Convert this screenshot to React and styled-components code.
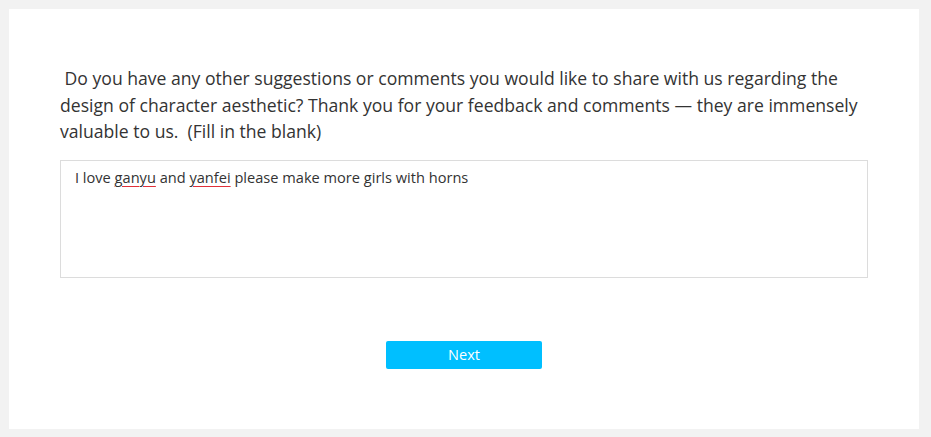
import React from 'react';
import styled, { createGlobalStyle } from 'styled-components';

const GlobalStyle = createGlobalStyle`
  html, body {
    margin: 0;
    padding: 0;
    background: #f2f2f2;
  }
  body {
    font-family: "Open Sans", "Noto Sans", sans-serif;
    color: #333;
  }
`;

const Page = styled.div`
  padding: 9px 12px 8px 9px;
  height: 437px;
  box-sizing: border-box;
`;

const Card = styled.div`
  background: #fff;
  height: 100%;
  box-sizing: border-box;
  padding: 56px 51px 0 51px;
  display: flex;
  flex-direction: column;
`;

const Question = styled.p`
  margin: 0;
  font-size: 17.6px;
  line-height: 26.5px;
  color: #333;
`;

const Answer = styled.div`
  margin-top: 15px;
  height: 118px;
  box-sizing: border-box;
  border: 1px solid #dcdcdc;
  padding: 7px 14px;
  font-size: 14.6px;
  line-height: 18px;
  color: #333;
`;

const Misspelled = styled.span`
  text-decoration-line: underline;
  text-decoration-style: solid;
  text-decoration-color: #e0303a;
  text-decoration-thickness: 1px;
  text-underline-offset: 3px;
`;

const Actions = styled.div`
  display: flex;
  justify-content: center;
  margin-top: 63px;
`;

const NextButton = styled.button`
  width: 156px;
  height: 28px;
  border: none;
  border-radius: 2px;
  background: #00bfff;
  color: #fff;
  font-family: "Open Sans", "Noto Sans", sans-serif;
  font-size: 14.5px;
  cursor: pointer;
`;

export default function App() {
  return (
    <>
      <GlobalStyle />
      <Page>
        <Card>
          <Question>
            &nbsp;Do you have any other suggestions or comments you would like to share with us regarding the
            design of character aesthetic? Thank you for your feedback and comments — they are immensely
            valuable to us.&nbsp; (Fill in the blank)
          </Question>
          <Answer>
            I love <Misspelled>ganyu</Misspelled> and <Misspelled>yanfei</Misspelled> please make more girls with horns
          </Answer>
          <Actions>
            <NextButton>Next</NextButton>
          </Actions>
        </Card>
      </Page>
    </>
  );
}
